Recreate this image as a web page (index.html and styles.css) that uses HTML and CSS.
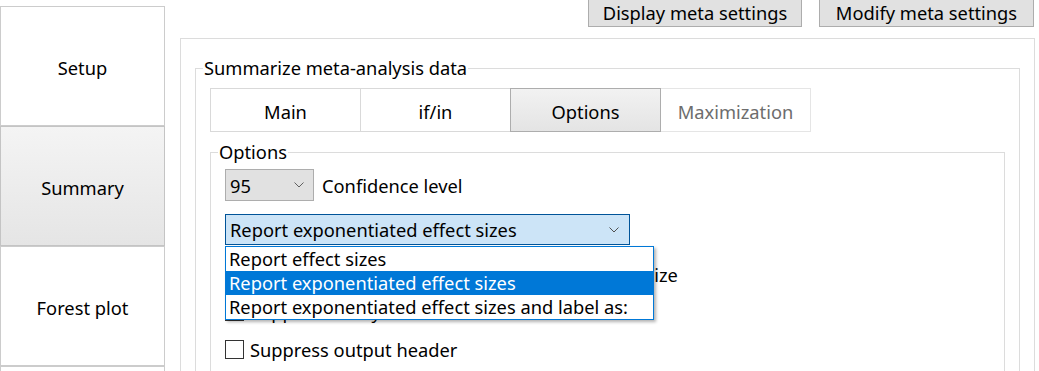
FILE: index.html
```html
<!DOCTYPE html>
<html lang="en">
<head>
    <meta charset="UTF-8">
    <title>meta summarize</title>
    <link rel="stylesheet" href="styles.css">
</head>
<body>
    <div class="sidebar">
        <div class="side-tab">Setup</div>
        <div class="side-tab active">Summary</div>
        <div class="side-tab">Forest plot</div>
        <div class="side-tab"></div>
    </div>

    <div class="main">
        <div class="topbar">
            <button class="btn">Display meta settings</button>
            <button class="btn">Modify meta settings</button>
        </div>

        <div class="panel">
            <fieldset class="group">
                <legend>Summarize meta-analysis data</legend>

                <div class="tabs">
                    <div class="tab">Main</div>
                    <div class="tab">if/in</div>
                    <div class="tab selected">Options</div>
                    <div class="tab disabled">Maximization</div>
                </div>

                <fieldset class="group options">
                    <legend>Options</legend>

                    <div class="row">
                        <div class="select small">
                            <span>95</span>
                            <svg class="chev" width="10" height="6" viewBox="0 0 10 6"><polyline points="0.5,0.5 5,5 9.5,0.5" fill="none" stroke="#606060" stroke-width="1"/></svg>
                        </div>
                        <span class="label">Confidence level</span>
                    </div>

                    <div class="combo">
                        <div class="select open">
                            <span>Report exponentiated effect sizes</span>
                            <svg class="chev" width="10" height="6" viewBox="0 0 10 6"><polyline points="0.5,0.5 5,5 9.5,0.5" fill="none" stroke="#505050" stroke-width="1"/></svg>
                        </div>
                        <ul class="popup">
                            <li>Report effect sizes</li>
                            <li class="hl">Report exponentiated effect sizes</li>
                            <li>Report exponentiated effect sizes and label as:</li>
                        </ul>
                    </div>

                    <div class="checks">
                        <label class="check"><span class="box"></span>Display heterogeneity statistics and the effect size</label>
                        <label class="check"><span class="box"></span>Suppress study information</label>
                        <label class="check"><span class="box"></span>Suppress output header</label>
                    </div>
                </fieldset>
            </fieldset>
        </div>
    </div>
</body>
</html>
```

FILE: styles.css
```css
* {
    box-sizing: border-box;
}

body {
    margin: 0;
    width: 1039px;
    height: 371px;
    overflow: hidden;
    display: flex;
    background: #fff;
    color: #000;
    font-family: "Noto Sans", "Open Sans", sans-serif;
    font-size: 18.3px;
}

/* left column of big tabs */
.sidebar {
    width: 165px;
    flex-shrink: 0;
    padding-top: 6px;
}

.side-tab {
    height: 120px;
    border: 1px solid #cccccc;
    display: flex;
    align-items: center;
    justify-content: center;
    padding-top: 3px;
}

.side-tab.active {
    background: linear-gradient(#f4f4f4, #e5e5e5);
    border-color: #c4c4c4;
}

.main {
    flex: 1;
    margin-left: 15px;
    margin-right: 4px;
    display: flex;
    flex-direction: column;
}

.topbar {
    display: flex;
    justify-content: flex-end;
    gap: 17px;
    height: 27px;
    margin-bottom: 11px;
    padding-right: 1px;
}

.btn {
    height: 27px;
    padding: 0;
    border: 1px solid #adadad;
    border-top: none;
    background: #e1e1e1;
    font: inherit;
    color: #000;
    line-height: 24px;
}

.btn:first-child {
    width: 214px;
}

.btn:last-child {
    width: 215px;
}

.panel {
    flex: 1;
    border: 1px solid #dcdcdc;
    border-bottom: none;
    padding: 18px 14px 0;
}

fieldset.group {
    margin: 0;
    border: 1px solid #dcdcdc;
    padding: 0 14px 14px;
    min-width: 0;
}

.panel > .group {
    height: 400px;
}

legend {
    padding: 0 1px;
    margin-left: -7px;
    line-height: 22px;
}

.tabs {
    display: flex;
    margin-top: 9px;
}

.tab {
    width: 151px;
    height: 44px;
    margin-left: -1px;
    border: 1px solid #d9d9d9;
    display: flex;
    align-items: center;
    justify-content: center;
    padding-top: 2px;
    background: #fff;
}

.tab:first-child {
    margin-left: 0;
}

.tab.selected {
    position: relative;
    border-color: #adadad;
    background: linear-gradient(#f2f2f2, #e4e4e4);
}

.tab.disabled {
    color: #6d6d6d;
    border-color: #e5e5e5;
}

fieldset.options {
    margin-top: 9px;
    padding-top: 6px;
    height: 300px;
}

.row {
    display: flex;
    align-items: center;
    gap: 8px;
}

.select {
    height: 32px;
    display: flex;
    align-items: center;
    justify-content: space-between;
    padding: 0 9px 0 4px;
    border: 1px solid #adadad;
    background: #e1e1e1;
}

.select.small {
    width: 89px;
}

.combo {
    position: relative;
    width: 405px;
    margin-top: 13px;
}

.select.open {
    height: 31px;
    border-color: #005499;
    background: #cce4f7;
    padding-right: 10px;
}

.popup {
    position: absolute;
    top: 32px;
    left: 0;
    width: 429px;
    margin: 0;
    padding: 0;
    list-style: none;
    background: #fff;
    border: 1px solid #0078d7;
    box-shadow: 2px 2px 3px rgba(0, 0, 0, 0.3);
    z-index: 2;
}

.popup li {
    height: 24px;
    line-height: 24px;
    padding-left: 3px;
    white-space: nowrap;
}

.popup li.hl {
    background: #0078d7;
    color: #fff;
}

.checks {
    display: flex;
    flex-direction: column;
    gap: 13.5px;
    margin-top: 17px;
}

.check {
    height: 24px;
    display: flex;
    align-items: center;
    gap: 6px;
    white-space: nowrap;
}

.box {
    width: 19px;
    height: 19px;
    border: 1px solid #333;
    background: #fff;
    flex-shrink: 0;
}
```
